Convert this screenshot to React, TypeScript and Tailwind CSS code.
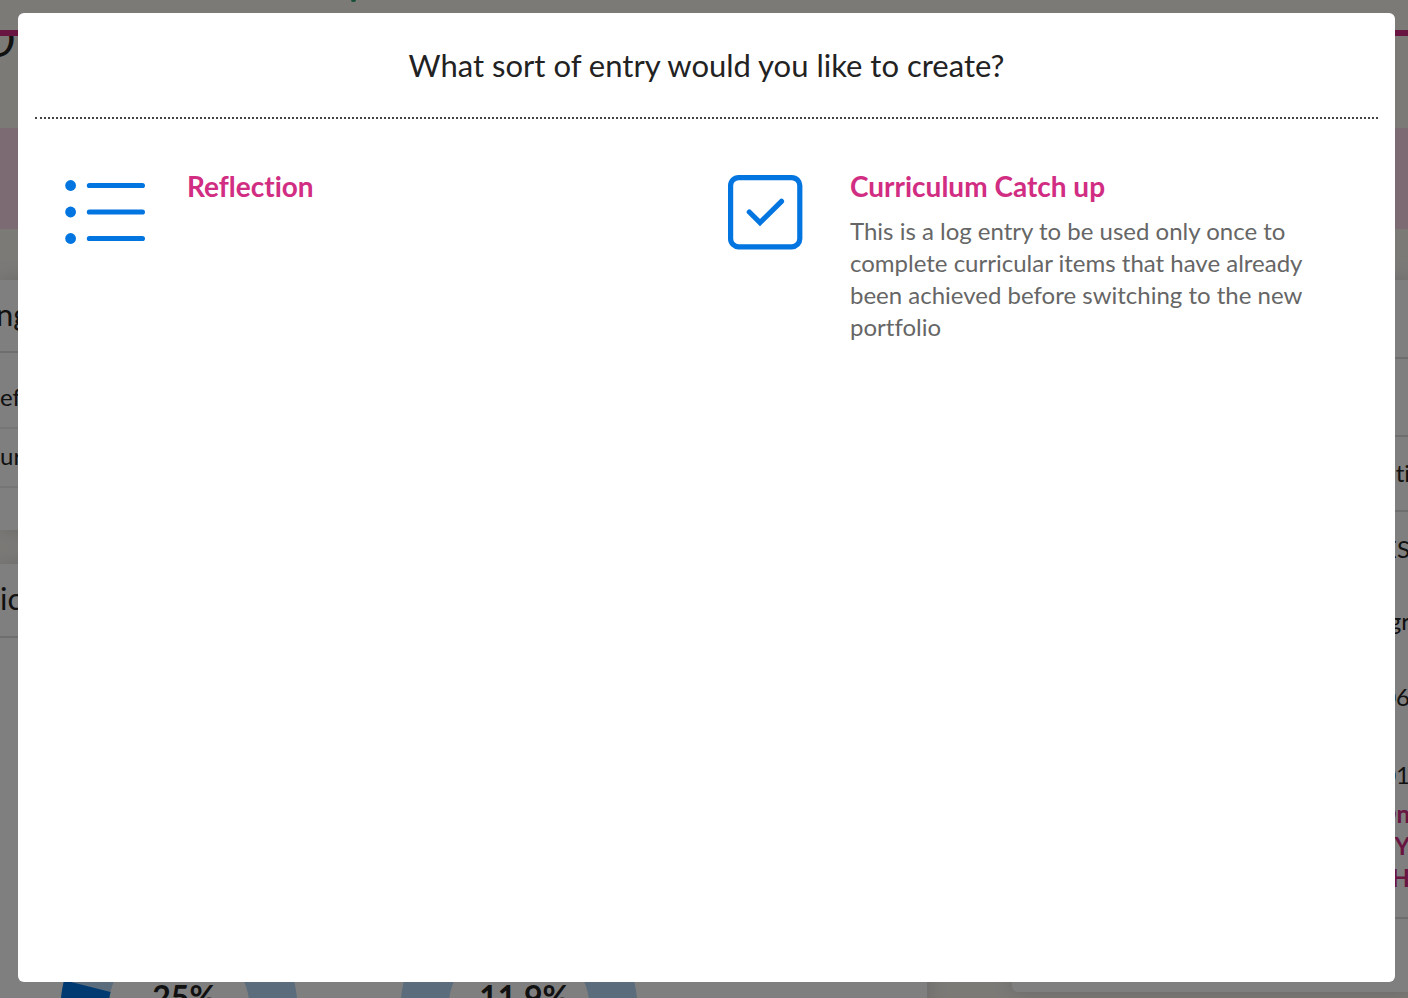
import type { ReactNode } from "react";

/** Entry types offered in the dialog. */
const entryTypes = [
  { id: "reflection", title: "Reflection", text: "", icon: <ListIcon /> },
  {
    id: "catch-up",
    title: "Curriculum Catch up",
    text: "This is a log entry to be used only once to complete curricular items that have already been achieved before switching to the new portfolio",
    icon: <CheckIcon />,
  },
];

function ListIcon() {
  return (
    <svg viewBox="0 0 82 82" className="size-[82px]" aria-hidden="true">
      <g fill="#0275e0">
        <circle cx="5.6" cy="13.5" r="5.4" />
        <circle cx="5.6" cy="40" r="5.4" />
        <circle cx="5.6" cy="66.5" r="5.4" />
      </g>
      <path
        d="M24.4 13.5H77.4M24.4 40H77.4M24.4 66.5H77.4"
        stroke="#0275e0"
        strokeWidth="5.2"
        strokeLinecap="round"
      />
    </svg>
  );
}

function CheckIcon() {
  return (
    <svg viewBox="0 0 82 82" className="size-[82px]" fill="none" aria-hidden="true">
      <g stroke="#0275e0" strokeWidth="5.2">
        <rect x="2.6" y="5.6" width="69.2" height="69.2" rx="8" />
        <path d="M21.3 40L32 50.5L53.5 29.3" strokeLinecap="round" />
      </g>
    </svg>
  );
}

function Donut({ label, children }: { label: string; children?: ReactNode }) {
  return (
    <svg viewBox="0 0 238 238" className="size-[238px] shrink-0">
      <circle cx="119" cy="119" r="94.5" fill="none" stroke="#b6dafa" strokeWidth="48" />
      {children}
      <text x="124" y="119" textAnchor="middle" fill="#222222" className="text-[32px] font-bold">
        {label}
      </text>
    </svg>
  );
}

function Portfolio() {
  return (
    <div aria-hidden="true" className="h-full overflow-hidden bg-[#f6f4ef] text-[24px] leading-8">
      <header className="flex h-9 border-b-[6px] border-[#d12d82]">
        <div className="ml-[351px] h-[2px] w-[5px] rounded-b-full bg-[#2f9e6e]" />
      </header>

      <div className="h-[92px] overflow-hidden">
        <p className="-ml-4 -mt-5 text-[44px] italic leading-[48px]">D</p>
      </div>
      <div className="h-[101px] bg-[#fad6e6]" />

      <div className="mt-[51px] flex gap-[85px]">
        <div className="min-w-0 flex-1">
          <section className="h-[250px] bg-white shadow-[0_0_20px_rgba(0,0,0,0.15)]">
            <h2 className="-ml-1 h-[71px] pt-[18px] text-[31px]">ng</h2>
            <p className="h-[76px] border-t-2 border-[#dddddd] pt-7">ef</p>
            <p className="h-[59px] border-t-2 border-[#ededed] pt-[11px]">ur</p>
            <div className="border-t-2 border-[#ededed]" />
          </section>

          <section className="mt-[34px] bg-white shadow-[0_0_20px_rgba(0,0,0,0.15)]">
            <h2 className="h-[74px] border-b-2 border-[#dddddd] pt-[18px] text-[31px]">ic</h2>
            <div className="flex gap-[102px] pl-[60px] pt-[252px]">
              <Donut label="25%">
                <circle
                  cx="119"
                  cy="119"
                  r="94.5"
                  fill="none"
                  stroke="#0275e0"
                  strokeWidth="48"
                  pathLength="100"
                  strokeDasharray="25 75"
                  transform="rotate(104 119 119)"
                />
              </Donut>
              <Donut label="11.9%" />
            </div>
          </section>
        </div>

        <section className="-mr-[2px] h-[712px] w-[398px] rounded-bl-md bg-white text-right shadow-[0_0_20px_rgba(0,0,0,0.15)]">
          <div className="h-[77px]" />
          <div className="h-[78px] border-t-2 border-[#dddddd]" />
          <p className="h-[75px] border-t-2 border-[#dddddd] pt-5">ti</p>
          <div className="h-[409px] border-y-2 border-[#dddddd] pt-[21px]">
            <p className="pb-10">ES</p>
            <p className="pb-11">gr</p>
            <p className="pb-[46px]">06</p>
            <p className="pb-[7px]">01</p>
            <p className="font-bold text-[#d12d82]">On</p>
            <p className="font-bold text-[#d12d82]">l Y</p>
            <p className="font-bold text-[#d12d82]">H</p>
          </div>
        </section>
      </div>
    </div>
  );
}

export default function App() {
  return (
    <div className="relative h-screen overflow-hidden font-['Lato',sans-serif] text-[#222222] [font-variant-ligatures:none]">
      <Portfolio />

      {/* Backdrop and entry dialog */}
      <div className="fixed inset-0 flex bg-black/50 pb-4 pl-[18px] pr-[13px] pt-[13px]">
        <div
          role="dialog"
          aria-modal="true"
          aria-labelledby="entry-title"
          className="flex-1 rounded-md bg-white px-[17px]"
        >
          <h1
            id="entry-title"
            className="border-b-2 border-dotted border-[#444444] py-8 text-center text-[31px] leading-10"
          >
            What sort of entry would you like to create?
          </h1>
          <div className="grid grid-cols-2 pl-2 pr-[9px] pt-[51px]">
            {entryTypes.map((entry) => (
              <button
                key={entry.id}
                type="button"
                className="flex cursor-pointer items-start gap-10 pl-[22px] pr-10 text-left"
              >
                <span className="mt-[2px] shrink-0">{entry.icon}</span>
                <span className="block">
                  <span className="block text-[28px] font-bold leading-8 text-[#d12d82]">
                    {entry.title}
                  </span>
                  {entry.text && (
                    <span className="mt-[13px] block text-[24px] leading-8 text-[#666666]">
                      {entry.text}
                    </span>
                  )}
                </span>
              </button>
            ))}
          </div>
        </div>
      </div>
    </div>
  );
}
